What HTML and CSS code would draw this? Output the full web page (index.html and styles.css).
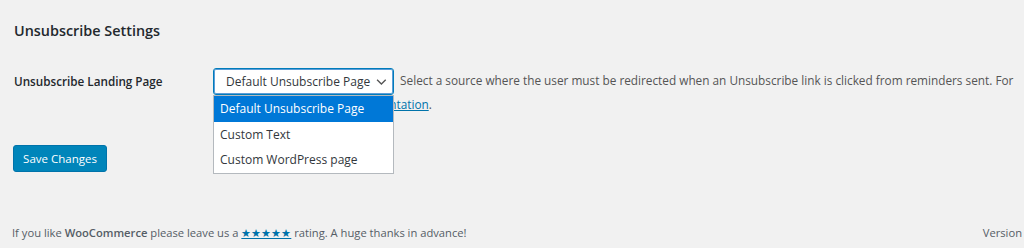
FILE: index.html
```html
<!DOCTYPE html>
<html>
<head>
<meta charset="utf-8">
<link rel="stylesheet" href="styles.css">
</head>
<body>
<div class="wrap">
  <h2 class="title">Unsubscribe Settings</h2>
  <div class="form-row">
    <div class="label">Unsubscribe Landing Page</div>
    <div class="field">
      <span class="select-wrap">
        <span class="select">Default Unsubscribe Page<svg class="chev" width="12" height="8" viewBox="0 0 12 8"><path d="M1.2 1.5 L6 6.2 L10.8 1.5" fill="none" stroke="#555" stroke-width="1.5"/></svg></span>
        <span class="dropdown">
          <span class="opt active">Default Unsubscribe Page</span>
          <span class="opt">Custom Text</span>
          <span class="opt">Custom WordPress page</span>
        </span>
      </span>
      <span class="desc">Select a source where the user must be redirected when an Unsubscribe link is clicked from reminders sent. For<br>more details, check our <a href="#">documentation</a>.</span>
    </div>
  </div>
  <button class="btn">Save Changes</button>
</div>
<div class="footer">
  <span>If you like <b>WooCommerce</b> please leave us a <a href="#" class="stars">★★★★★</a> rating. A huge thanks in advance!</span>
  <span class="version">Version</span>
</div>
</body>
</html>
```
FILE: styles.css
```css
html, body {
  margin: 0;
  padding: 0;
  background: #f1f1f1;
  font-family: "Open Sans", "Noto Sans", sans-serif;
  color: #23282d;
  font-size: 12px;
  overflow: hidden;
}
.wrap {
  padding: 0 0 0 14px;
}
.title {
  margin: 0;
  padding-top: 20px;
  font-size: 14.4px;
  font-weight: 600;
  line-height: 22px;
  color: #23282d;
}
.form-row {
  display: flex;
  margin-top: 26px;
}
.label {
  width: 199px;
  flex: none;
  font-weight: 600;
  font-size: 11.7px;
  line-height: 26px;
  color: #23282d;
}
.field {
  flex: 1;
  line-height: 18px;
  color: #555;
  font-size: 11.8px;
  white-space: nowrap;
}
.select-wrap {
  position: relative;
  display: inline-block;
  vertical-align: middle;
}
.select {
  display: flex;
  align-items: center;
  justify-content: space-between;
  box-sizing: border-box;
  width: 181px;
  height: 27px;
  padding: 0 6px 0 12px;
  background: #fff;
  border: 1px solid #007cba;
  border-radius: 3px;
  box-shadow: 0 0 0 1px #5b9dd9 inset;
  color: #32373c;
  font-size: 12px;
  white-space: nowrap;
}
.chev {
  margin-left: 6px;
}
.dropdown {
  position: absolute;
  left: 0;
  top: 27px;
  width: 181px;
  box-sizing: border-box;
  background: #fff;
  border: 1px solid #b4b9be;
  display: flex;
  flex-direction: column;
  z-index: 5;
}
.opt {
  height: 25.5px;
  line-height: 25px;
  padding-left: 6px;
  color: #32373c;
  font-size: 12px;
}
.opt.active {
  background: #0078d7;
  color: #fff;
}
.desc {
  padding-left: 3px;
}
.desc a {
  color: #0073aa;
}
.btn {
  display: block;
  margin-top: 32px;
  margin-left: -1px;
  width: 94px;
  height: 27px;
  background: #0085ba;
  border: 1px solid #0073aa;
  border-radius: 3px;
  color: #fff;
  font-family: inherit;
  font-size: 11.5px;
  padding: 0;
  cursor: pointer;
}
.footer {
  display: flex;
  justify-content: space-between;
  padding: 0 0 0 12px;
  margin-top: 52px;
  font-size: 11.2px;
  line-height: 18px;
  color: #555d66;
  white-space: nowrap;
}
.footer b {
  font-weight: 600;
}
.stars {
  color: #0073aa;
}
.version {
  margin-right: 2px;
}
```
